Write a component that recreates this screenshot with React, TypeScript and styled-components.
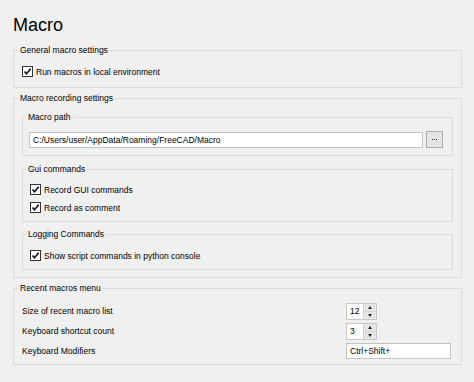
import styled, { createGlobalStyle } from "styled-components";

const GlobalStyle = createGlobalStyle`
  html, body {
    margin: 0;
    padding: 0;
    background: #f0f0f0;
  }
  body {
    font-family: "Liberation Sans", Arial, sans-serif;
    font-size: 8.5px;
    color: #000;
  }
`;

const Page = styled.div`
  width: 474px;
  height: 382px;
  box-sizing: border-box;
  padding: 14px 12px 0 13px;
  overflow: hidden;
`;

const Title = styled.h1`
  margin: 0 0 8.5px;
  font-size: 18px;
  line-height: 22px;
  font-weight: 400;
`;

const Group = styled.fieldset<{ $inner?: boolean; $pt?: number; $pb?: number; $gap?: number }>`
  margin: 0 0 ${(p) => (p.$inner ? 4.5 : 5.5)}px;
  padding: ${(p) => p.$pt ?? 8}px ${(p) => (p.$inner ? 9 : 8)}px ${(p) => p.$pb ?? 7}px
    ${(p) => (p.$inner ? 7 : 8)}px;
  border: 1px solid #dadada;
  min-width: 0;
  display: flex;
  flex-direction: column;
  gap: ${(p) => p.$gap ?? 3}px;

  &:last-child {
    margin-bottom: 0;
  }
`;

const Legend = styled.legend`
  padding: 0 2px;
  margin-left: -4px;
  line-height: 11px;
`;

const CheckRow = styled.label`
  display: flex;
  align-items: center;
  gap: 3px;
  height: 16px;
`;

const Box = styled.span`
  width: 11px;
  height: 11px;
  box-sizing: border-box;
  border: 1px solid #333;
  background: #fff;
  display: flex;
  align-items: center;
  justify-content: center;
`;

const PathRow = styled.div`
  display: flex;
  align-items: center;
  gap: 3px;
  margin-left: -1px;
`;

const LineEdit = styled.div<{ $w?: number }>`
  ${(p) => (p.$w ? `width: ${p.$w}px;` : "flex: 1;")}
  height: 16px;
  box-sizing: border-box;
  border: 1px solid #c4c4c4;
  background: #fff;
  padding: 0 3px;
  display: flex;
  align-items: center;
  white-space: nowrap;
`;

const DotsButton = styled.div`
  width: 17px;
  height: 17px;
  box-sizing: border-box;
  border: 1px solid #acacac;
  background: #e5e5e5;
  display: flex;
  align-items: center;
  justify-content: center;
  gap: 1px;
`;

const Dot = styled.span`
  width: 1px;
  height: 1px;
  background: #333;
`;

const FormGrid = styled.div`
  display: grid;
  grid-template-columns: 1fr 106px;
  row-gap: 3px;
  padding-right: 1px;
`;

const FormLabel = styled.span`
  height: 17px;
  display: flex;
  align-items: center;
`;

const FieldCell = styled.div`
  height: 17px;
  display: flex;
  align-items: center;
`;

const Spin = styled.div`
  width: 31px;
  height: 17px;
  box-sizing: border-box;
  border: 1px solid #c8c8c8;
  background: #fff;
  display: flex;
`;

const SpinValue = styled.span`
  flex: 1;
  padding-left: 3px;
  display: flex;
  align-items: center;
`;

const SpinArrows = styled.div`
  width: 12px;
  display: flex;
  flex-direction: column;
  background: #e6e6e6;
  border-left: 1px solid #d0d0d0;
`;

const SpinBtn = styled.div<{ $down?: boolean }>`
  flex: 1;
  display: flex;
  align-items: center;
  justify-content: center;
  ${(p) => (p.$down ? "" : "border-bottom: 1px solid #d6d6d6;")}

  &::before {
    content: "";
    width: 0;
    height: 0;
    border-left: 2.5px solid transparent;
    border-right: 2.5px solid transparent;
    ${(p) =>
      p.$down ? "border-top: 3px solid #222;" : "border-bottom: 3px solid #222;"}
  }
`;

function Check({ label }: { label: string }) {
  return (
    <CheckRow>
      <Box>
        <svg width="9" height="9" viewBox="0 0 9 9">
          <path d="M1.5 4.5 L3.5 6.8 L7.6 1.8" fill="none" stroke="#111" strokeWidth="1.6" />
        </svg>
      </Box>
      {label}
    </CheckRow>
  );
}

function SpinBox({ value }: { value: string }) {
  return (
    <Spin>
      <SpinValue>{value}</SpinValue>
      <SpinArrows>
        <SpinBtn />
        <SpinBtn $down />
      </SpinArrows>
    </Spin>
  );
}

export default function App() {
  return (
    <Page>
      <GlobalStyle />
      <Title>Macro</Title>

      <Group>
        <Legend>General macro settings</Legend>
        <Check label="Run macros in local environment" />
      </Group>

      <Group>
        <Legend>Macro recording settings</Legend>
        <Group $inner>
          <Legend>Macro path</Legend>
          <PathRow>
            <LineEdit>C:/Users/user/AppData/Roaming/FreeCAD/Macro</LineEdit>
            <DotsButton>
              <Dot />
              <Dot />
              <Dot />
            </DotsButton>
          </PathRow>
        </Group>
        <Group $inner $pt={7} $gap={2} $pb={5}>
          <Legend>Gui commands</Legend>
          <Check label="Record GUI commands" />
          <Check label="Record as comment" />
        </Group>
        <Group $inner $pt={7.5} $pb={5}>
          <Legend>Logging Commands</Legend>
          <Check label="Show script commands in python console" />
        </Group>
      </Group>

      <Group $pt={8.5} $pb={4.5}>
        <Legend>Recent macros menu</Legend>
        <FormGrid>
          <FormLabel>Size of recent macro list</FormLabel>
          <FieldCell>
            <SpinBox value="12" />
          </FieldCell>
          <FormLabel>Keyboard shortcut count</FormLabel>
          <FieldCell>
            <SpinBox value="3" />
          </FieldCell>
          <FormLabel>Keyboard Modifiers</FormLabel>
          <FieldCell>
            <LineEdit $w={105}>Ctrl+Shift+</LineEdit>
          </FieldCell>
        </FormGrid>
      </Group>
    </Page>
  );
}
